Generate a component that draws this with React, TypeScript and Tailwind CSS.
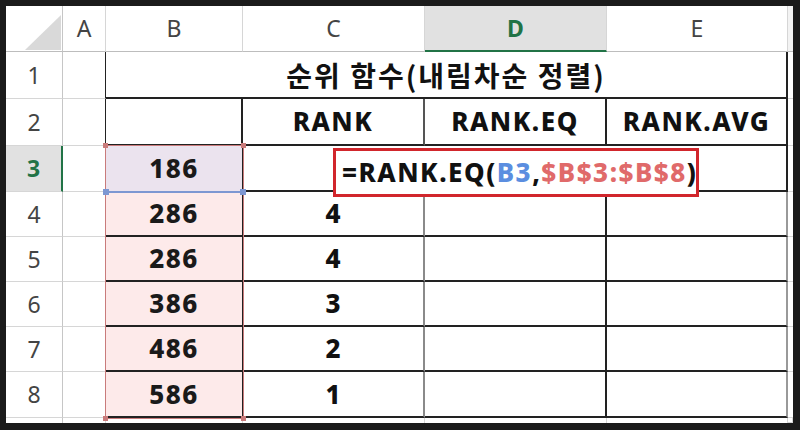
import clsx from "clsx";

const LATIN = "font-['Noto_Sans','Noto_Sans_CJK_KR',sans-serif]";

const rows = [
  { n: 4, b: "286", c: "4" },
  { n: 5, b: "286", c: "4" },
  { n: 6, b: "386", c: "3" },
  { n: 7, b: "486", c: "2" },
  { n: 8, b: "586", c: "1" },
];

const Cell = ({ className, children }: { className?: string; children?: React.ReactNode }) => (
  <div className={clsx("flex items-center justify-center border-r border-b border-[#d6d6d6]", className)}>
    {children}
  </div>
);

const RowNum = ({ n }: { n: number }) => (
  <Cell className="border-r-[#c6c6c6] text-[23px] text-[#444]">{n}</Cell>
);

export default function App() {
  return (
    <div className={clsx("w-[800px] h-[430px] bg-[#1b1b1b] pt-[6px] pl-[6px] pr-[7px] pb-[7px] flex", LATIN)}>
      <div className="relative flex-1 bg-white overflow-hidden">
        <div className="grid grid-cols-[57px_43px_137px_182px_182px_181px_1fr] grid-rows-[46px_47px_47px_46px_45px_45px_45px_45px_46px_1fr] h-full">
          {/* column header row */}
          <Cell className="border-r-[#c6c6c6] border-b-[#bdbdbd] relative">
            <svg width="57" height="46" className="absolute left-0 top-0">
              <polygon points="55,9 55,44 19,44" fill="#d9d9d9" />
            </svg>
          </Cell>
          <Cell className="border-b-[#bdbdbd] text-[23px] text-[#444]">A</Cell>
          <Cell className="border-b-[#bdbdbd] text-[23px] text-[#444]">B</Cell>
          <Cell className="border-b-[#bdbdbd] text-[23px] text-[#444]">C</Cell>
          <Cell className="bg-[#e1e1e1] border-b-2 border-b-[#217346] text-[23px] font-bold text-[#217346]">D</Cell>
          <Cell className="border-b-[#bdbdbd] text-[23px] text-[#444]">E</Cell>
          <Cell className="border-r-0 border-b-[#bdbdbd] bg-[#f3f3f3]" />

          {/* row 1 */}
          <RowNum n={1} />
          <Cell className="border-r-[#222]" />
          <Cell className="col-span-4 border-r-2 border-r-[#222] border-b-2 border-b-[#222] text-[28px] font-bold text-[#111] tracking-[2px] font-['Noto_Sans_CJK_KR',sans-serif]">
            순위 함수(내림차순 정렬)
          </Cell>
          <Cell className="border-r-0" />

          {/* row 2 */}
          <RowNum n={2} />
          <Cell className="border-r-[#222]" />
          <Cell className="border-r-2 border-r-[#222] border-b-2 border-b-[#222]" />
          <Cell className="border-r-2 border-r-[#555] border-b-2 border-b-[#222] text-[26px] font-extrabold text-[#111] tracking-[1.5px]">RANK</Cell>
          <Cell className="border-r-2 border-r-[#222] border-b-2 border-b-[#222] text-[26px] font-extrabold text-[#111] tracking-[1.5px]">RANK.EQ</Cell>
          <Cell className="border-r-2 border-r-[#222] border-b-2 border-b-[#222] text-[26px] font-extrabold text-[#111] tracking-[1.5px]">RANK.AVG</Cell>
          <Cell className="border-r-0" />

          {/* row 3 */}
          <Cell className="bg-[#e1e1e1] border-r-2 border-r-[#217346] text-[23px] font-bold text-[#217346]">3</Cell>
          <Cell />
          <Cell className="bg-[#ebe3ee] border-r-[#222] text-[26px] font-extrabold text-[#1a1a1a] tracking-[1.5px]">186</Cell>
          <Cell className="col-span-3 border-r-2 border-r-[#222] border-b-2 border-b-[#222]" />
          <Cell className="border-r-0" />

          {rows.map((r) => (
            <div key={r.n} className="contents">
              <RowNum n={r.n} />
              <Cell />
              <Cell className="bg-[#fdeaea] border-r-[#222] border-b-2 border-b-[#222] text-[26px] font-extrabold text-[#1a1a1a] tracking-[1.5px]">
                {r.b}
              </Cell>
              <Cell className="border-r-2 border-r-[#8a8a8a] border-b-2 border-b-[#222] text-[26px] font-extrabold text-[#111]">
                {r.c}
              </Cell>
              <Cell className="border-r-2 border-r-[#222] border-b-2 border-b-[#222]" />
              <Cell className="border-r-2 border-r-[#999] border-b-2 border-b-[#222]" />
              <Cell className="border-r-0" />
            </div>
          ))}

          {/* trailing sliver */}
          <Cell className="border-r-[#c6c6c6] border-b-0" />
          <Cell className="border-b-0" />
          <Cell className="border-b-0" />
          <Cell className="border-b-0" />
          <Cell className="border-b-0" />
          <Cell className="border-b-0" />
          <Cell className="border-0" />
        </div>

        {/* selected range B3:B8 */}
        <div className="absolute left-[99px] top-[139px] w-[139px] h-[274px] border border-[#c97b7b] pointer-events-none">
          <span className="absolute -left-[3px] -top-[3px] w-[5px] h-[5px] bg-[#c97b7b]" />
          <span className="absolute -right-[3px] -top-[3px] w-[5px] h-[5px] bg-[#c97b7b]" />
          <span className="absolute -left-[3px] -bottom-[3px] w-[5px] h-[5px] bg-[#c97b7b]" />
          <span className="absolute -right-[3px] -bottom-[3px] w-[5px] h-[5px] bg-[#c97b7b]" />
        </div>
        {/* B3 reference */}
        <div className="absolute left-[100px] top-[185px] w-[137px] h-[2px] bg-[#7d97d2]">
          <span className="absolute -left-[3px] -top-[2px] w-[6px] h-[6px] bg-[#7d97d2]" />
          <span className="absolute -right-[3px] -top-[2px] w-[6px] h-[6px] bg-[#7d97d2]" />
        </div>

        {/* formula annotation */}
        <div className="absolute left-[327px] top-[142px] w-[366px] h-[49px] border-[3px] border-[#d1262c] bg-white flex items-center pl-[6px] text-[26px] font-extrabold tracking-[1.5px] text-[#111]">
          <span>=RANK.EQ(</span>
          <span className="text-[#5b8ee0]">B3</span>
          <span>,</span>
          <span className="text-[#e06a6a]">$B$3:$B$8</span>
          <span>)</span>
        </div>
      </div>
    </div>
  );
}
